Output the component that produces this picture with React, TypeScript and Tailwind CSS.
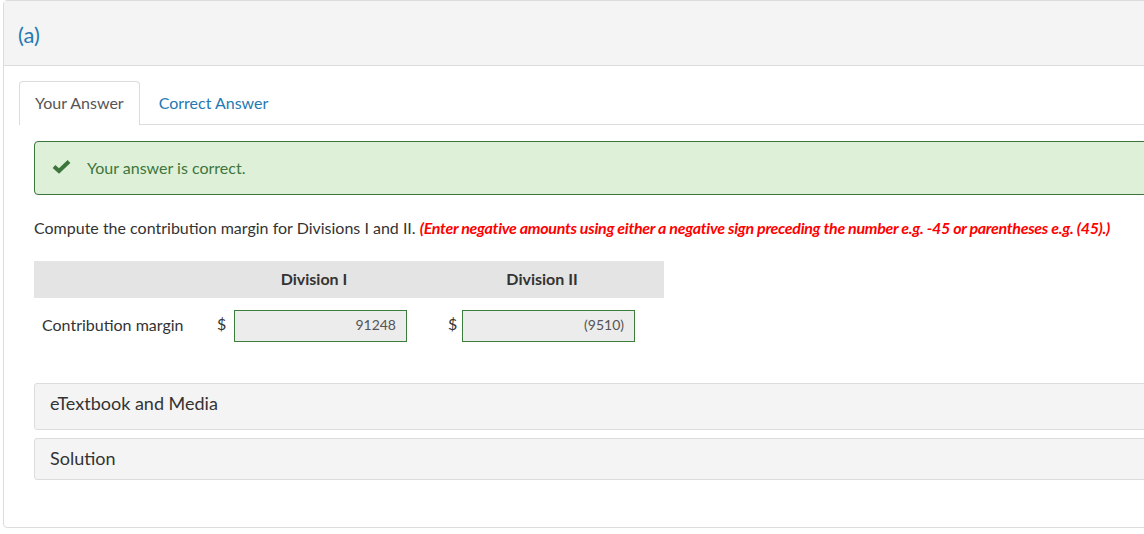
export default function App() {
  return (
    <div className="w-[1144px] h-[534px] overflow-hidden bg-white font-['Lato','Noto_Sans',sans-serif]">
      <div className="ml-[3px] w-[1300px] border border-[#dcdcdc] rounded-[4px]">
        <div className="h-[65px] bg-[#f4f4f4] border-b border-[#dcdcdc] pl-[14px] flex items-center">
          <span className="text-[22px] text-[#2479b3] leading-none mt-[3px]">(a)</span>
        </div>

        <div className="pl-[15px] pt-[15px] pb-[47px]">
          <div className="flex border-b border-[#dcdcdc]">
            <div className="h-[44px] pb-[2px] px-[15px] flex items-center border border-b-0 border-[#dcdcdc] rounded-t-[4px] bg-white -mb-px text-[16px] text-[#555]">
              Your Answer
            </div>
            <div className="h-[43px] px-[19px] flex items-center text-[16px] text-[#2479b3]">
              Correct Answer
            </div>
          </div>

          <div className="pl-[15px]">
            <div className="mt-[16px] h-[54px] bg-[#dff0d8] border border-[#3c763d] rounded-[4px] flex items-center pl-[17px]">
              <svg width="19" height="15" viewBox="0 0 19 15" className="mt-[-3px]">
                <path d="M2 7.5 L7 12 L17 2.5" fill="none" stroke="#3c763d" strokeWidth="4" />
              </svg>
              <span className="ml-[16px] text-[16px] text-[#3c763d]">Your answer is correct.</span>
            </div>

            <p className="mt-[23px] text-[16px] text-[#333] leading-[20px] whitespace-nowrap">
              Compute the contribution margin for Divisions I and II.{" "}
              <span className="text-[#f00] font-bold italic tracking-[-0.3px]">
                (Enter negative amounts using either a negative sign preceding the number e.g. -45 or parentheses e.g. (45).)
              </span>
            </p>

            <div className="mt-[23px] w-[630px]">
              <div className="h-[37px] pb-[2px] bg-[#e4e4e4] grid grid-cols-[166px_228px_228px_8px] items-center text-[16px] font-bold text-[#333]">
                <div />
                <div className="text-center">Division I</div>
                <div className="text-center">Division II</div>
                <div />
              </div>
              <div className="h-[55px] grid grid-cols-[166px_228px_228px_8px] items-center text-[16px] text-[#333]">
                <div className="pl-[8px] mb-[2px]">Contribution margin</div>
                <div className="flex items-center">
                  <span className="w-[34px] pl-[17px] mb-[4px]">$</span>
                  <div className="w-[173px] h-[32px] pb-[2px] bg-[#ececec] border border-[#3b7d3b] flex items-center justify-end pr-[10px] text-[14px] text-[#555]">
                    91248
                  </div>
                </div>
                <div className="flex items-center">
                  <span className="w-[34px] pl-[20px] mb-[4px]">$</span>
                  <div className="w-[173px] h-[32px] pb-[2px] bg-[#ececec] border border-[#3b7d3b] flex items-center justify-end pr-[10px] text-[14px] text-[#555]">
                    (9510)
                  </div>
                </div>
                <div />
              </div>
            </div>

            <div className="mt-[30px] h-[47px] pb-[6px] bg-[#f4f4f4] border border-[#dcdcdc] rounded-[3px] flex items-center pl-[15px] text-[18px] text-[#333]">
              eTextbook and Media
            </div>
            <div className="mt-[8px] h-[42px] pb-[2px] bg-[#f4f4f4] border border-[#dcdcdc] rounded-[3px] flex items-center pl-[15px] text-[18px] text-[#333]">
              Solution
            </div>
          </div>
        </div>
      </div>
    </div>
  );
}
